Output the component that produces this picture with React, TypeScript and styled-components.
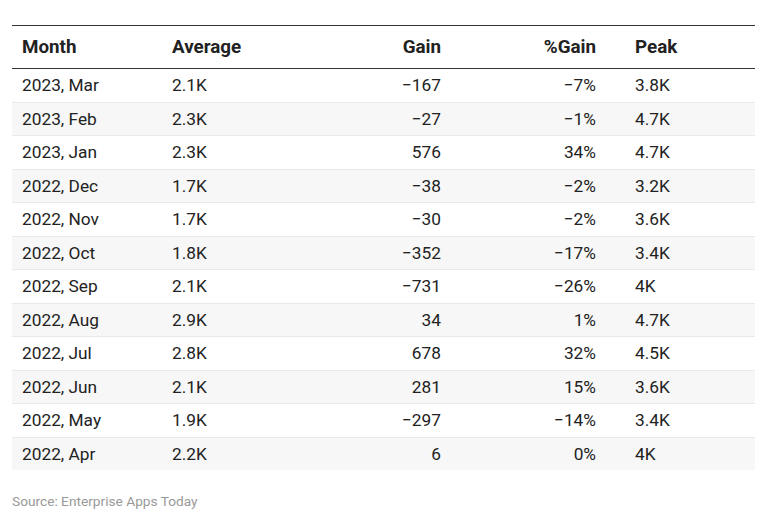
import { createGlobalStyle } from 'styled-components';
import styled from 'styled-components';

const GlobalStyle = createGlobalStyle`
  body {
    margin: 0;
    background: #fff;
    font-family: Roboto, 'Liberation Sans', sans-serif;
    color: #222;
  }
`;

const Wrapper = styled.div`
  padding: 25px 13px 0 12px;
`;

const Table = styled.table`
  width: 743px;
  border-collapse: collapse;
  table-layout: fixed;
  border-top: 1px solid #333;
  font-size: 17.3px;
`;

const HeadCell = styled.th<{ align?: string; padRight?: number }>`
  height: 42px;
  padding: 0 ${(p) => p.padRight ?? 10}px 0 10px;
  text-align: ${(p) => p.align ?? 'left'};
  font-weight: 700;
  font-size: 18.8px;
  border-bottom: 1px solid #333;
  color: #222;
`;

const Row = styled.tr<{ striped: boolean }>`
  background: ${(p) => (p.striped ? '#f7f7f7' : '#fff')};
  border-bottom: 1px solid #e9e9e9;
  &:last-child {
    border-bottom: none;
  }
`;

const Cell = styled.td<{ align?: string; padRight?: number }>`
  height: 32.5px;
  padding: 0 ${(p) => p.padRight ?? 10}px 0 10px;
  text-align: ${(p) => p.align ?? 'left'};
  color: #222;
`;

const Source = styled.div`
  margin-top: 23px;
  font-size: 13.7px;
  color: #999;
`;

const rows = [
  ['2023, Mar', '2.1K', '−167', '−7%', '3.8K'],
  ['2023, Feb', '2.3K', '−27', '−1%', '4.7K'],
  ['2023, Jan', '2.3K', '576', '34%', '4.7K'],
  ['2022, Dec', '1.7K', '−38', '−2%', '3.2K'],
  ['2022, Nov', '1.7K', '−30', '−2%', '3.6K'],
  ['2022, Oct', '1.8K', '−352', '−17%', '3.4K'],
  ['2022, Sep', '2.1K', '−731', '−26%', '4K'],
  ['2022, Aug', '2.9K', '34', '1%', '4.7K'],
  ['2022, Jul', '2.8K', '678', '32%', '4.5K'],
  ['2022, Jun', '2.1K', '281', '15%', '3.6K'],
  ['2022, May', '1.9K', '−297', '−14%', '3.4K'],
  ['2022, Apr', '2.2K', '6', '0%', '4K'],
];

export default function App() {
  return (
    <Wrapper>
      <GlobalStyle />
      <Table>
        <colgroup>
          <col style={{ width: 150 }} />
          <col style={{ width: 150 }} />
          <col style={{ width: 139 }} />
          <col style={{ width: 174 }} />
          <col style={{ width: 130 }} />
        </colgroup>
        <thead>
          <tr>
            <HeadCell>Month</HeadCell>
            <HeadCell>Average</HeadCell>
            <HeadCell align="right">Gain</HeadCell>
            <HeadCell align="right" padRight={29}>
              %Gain
            </HeadCell>
            <HeadCell>Peak</HeadCell>
          </tr>
        </thead>
        <tbody>
          {rows.map((r, i) => (
            <Row key={r[0]} striped={i % 2 === 1}>
              <Cell>{r[0]}</Cell>
              <Cell>{r[1]}</Cell>
              <Cell align="right">{r[2]}</Cell>
              <Cell align="right" padRight={29}>
                {r[3]}
              </Cell>
              <Cell>{r[4]}</Cell>
            </Row>
          ))}
        </tbody>
      </Table>
      <Source>Source: Enterprise Apps Today</Source>
    </Wrapper>
  );
}
